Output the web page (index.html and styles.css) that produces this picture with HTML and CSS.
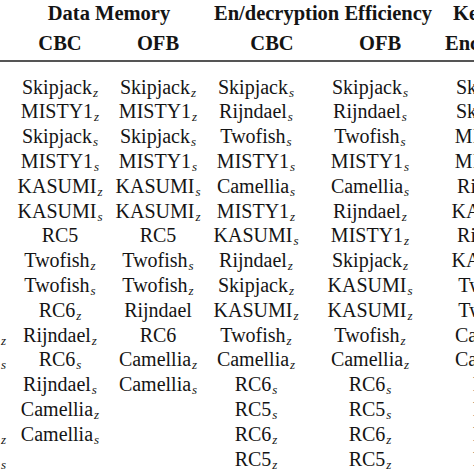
FILE: index.html
```html
<!DOCTYPE html>
<html>
<head>
<meta charset="utf-8">
<link rel="stylesheet" href="styles.css">
</head>
<body>
<table class="tbl">
  <colgroup>
    <col class="c0"><col class="c1"><col class="c2"><col class="c3"><col class="c4"><col class="c5">
  </colgroup>
  <thead>
    <tr class="h1">
      <th></th>
      <th colspan="2">Data Memory</th>
      <th colspan="2" class="grp2">En/decryption Efficiency</th>
      <th class="left k">Key Setup Efficiency</th>
    </tr>
    <tr class="h2">
      <th></th>
      <th>CBC</th>
      <th>OFB</th>
      <th class="sh3">CBC</th>
      <th class="sh4">OFB</th>
      <th class="left e">Encryption</th>
    </tr>
  </thead>
  <tbody>
    <tr class="gap"><td colspan="6"></td></tr>
    <tr><td class="r"></td><td>Skipjack<sub class="s">z</sub></td><td>Skipjack<sub class="s">z</sub></td><td>Skipjack<sub class="s">s</sub></td><td>Skipjack<sub class="s">s</sub></td><td>Skipjack<sub class="s">s</sub></td></tr>
    <tr><td class="r"></td><td>MISTY1<sub class="s">z</sub></td><td>MISTY1<sub class="s">z</sub></td><td>Rijndael<sub class="s">s</sub></td><td>Rijndael<sub class="s">s</sub></td><td>Skipjack<sub class="s">z</sub></td></tr>
    <tr><td class="r"></td><td>Skipjack<sub class="s">s</sub></td><td>Skipjack<sub class="s">s</sub></td><td>Twofish<sub class="s">s</sub></td><td>Twofish<sub class="s">s</sub></td><td>MISTY1<sub class="s">s</sub></td></tr>
    <tr><td class="r"></td><td>MISTY1<sub class="s">s</sub></td><td>MISTY1<sub class="s">s</sub></td><td>MISTY1<sub class="s">s</sub></td><td>MISTY1<sub class="s">s</sub></td><td>MISTY1<sub class="s">z</sub></td></tr>
    <tr><td class="r"></td><td>KASUMI<sub class="s">z</sub></td><td>KASUMI<sub class="s">s</sub></td><td>Camellia<sub class="s">s</sub></td><td>Camellia<sub class="s">s</sub></td><td>Rijndael<sub class="s">s</sub></td></tr>
    <tr><td class="r"></td><td>KASUMI<sub class="s">s</sub></td><td>KASUMI<sub class="s">z</sub></td><td>MISTY1<sub class="s">z</sub></td><td>Rijndael<sub class="s">z</sub></td><td>KASUMI<sub class="s">s</sub></td></tr>
    <tr><td class="r"></td><td>RC5</td><td>RC5</td><td>KASUMI<sub class="s">s</sub></td><td>MISTY1<sub class="s">z</sub></td><td>Rijndael<sub class="s">z</sub></td></tr>
    <tr><td class="r"></td><td>Twofish<sub class="s">z</sub></td><td>Twofish<sub class="s">s</sub></td><td>Rijndael<sub class="s">z</sub></td><td>Skipjack<sub class="s">z</sub></td><td>KASUMI<sub class="s">z</sub></td></tr>
    <tr><td class="r"></td><td>Twofish<sub class="s">s</sub></td><td>Twofish<sub class="s">z</sub></td><td>Skipjack<sub class="s">z</sub></td><td>KASUMI<sub class="s">s</sub></td><td>Twofish<sub class="s">s</sub></td></tr>
    <tr><td class="r"></td><td>RC6<sub class="s">z</sub></td><td>Rijndael</td><td>KASUMI<sub class="s">z</sub></td><td>KASUMI<sub class="s">z</sub></td><td>Twofish<sub class="s">z</sub></td></tr>
    <tr><td class="r">Rijndael<sub class="s">z</sub></td><td>Rijndael<sub class="s">z</sub></td><td>RC6</td><td>Twofish<sub class="s">z</sub></td><td>Twofish<sub class="s">z</sub></td><td>Camellia<sub class="s">s</sub></td></tr>
    <tr><td class="r">RC6<sub class="s">s</sub></td><td>RC6<sub class="s">s</sub></td><td>Camellia<sub class="s">z</sub></td><td>Camellia<sub class="s">z</sub></td><td>Camellia<sub class="s">z</sub></td><td>Camellia<sub class="s">z</sub></td></tr>
    <tr><td class="r"></td><td>Rijndael<sub class="s">s</sub></td><td>Camellia<sub class="s">s</sub></td><td>RC6<sub class="s">s</sub></td><td>RC6<sub class="s">s</sub></td><td>RC6<sub class="s">s</sub></td></tr>
    <tr><td class="r"></td><td>Camellia<sub class="s">z</sub></td><td></td><td>RC5<sub class="s">s</sub></td><td>RC5<sub class="s">s</sub></td><td>RC5<sub class="s">s</sub></td></tr>
    <tr><td class="r">Camellia<sub class="s">z</sub></td><td>Camellia<sub class="s">s</sub></td><td></td><td>RC6<sub class="s">z</sub></td><td>RC6<sub class="s">z</sub></td><td>RC6<sub class="s">z</sub></td></tr>
    <tr><td class="r">Camellia<sub class="s">s</sub></td><td></td><td></td><td>RC5<sub class="s">z</sub></td><td>RC5<sub class="s">z</sub></td><td>RC5<sub class="s">z</sub></td></tr>
  </tbody>
</table>
</body>
</html>
```

FILE: styles.css
```css
html, body {
  margin: 0;
  padding: 0;
  background: #ffffff;
  overflow: hidden;
  width: 474px;
  height: 474px;
}

.tbl {
  border-collapse: collapse;
  table-layout: fixed;
  width: 644px;
  margin-left: -91px;
  font-family: "Liberation Serif", "Times New Roman", serif;
  color: #141414;
  white-space: nowrap;
}

.c0 { width: 102px; }
.c1 { width: 98px; }
.c2 { width: 98px; }
.c3 { width: 98px; }
.c4 { width: 130px; }
.c5 { width: 118px; }

th {
  font-weight: bold;
  font-size: 20.5px;
  padding: 0;
  text-align: center;
  vertical-align: middle;
}

.h1 th {
  height: 27px;
  line-height: 27px;
}

.h2 th {
  height: 33px;
  line-height: 33px;
  border-bottom: 2px solid #555555;
}

.grp2 { padding-left: 4px; }
.sh3 { padding-left: 32px; }
.sh4 { padding-left: 20px; }
.left { text-align: left; overflow: hidden; }
.k { padding-left: 18px; }
.e { padding-left: 10px; }

td {
  font-size: 20px;
  padding: 0;
  height: 24.8px;
  line-height: 24.8px;
  text-align: center;
  vertical-align: middle;
  overflow: hidden;
}

.gap td {
  height: 12.6px;
  line-height: 12.6px;
}

td.r {
  text-align: right;
  padding-right: 5px;
}

.s {
  font-style: italic;
  font-size: 13px;
  line-height: 0;
  vertical-align: -3px;
  margin-left: 1px;
}
```
